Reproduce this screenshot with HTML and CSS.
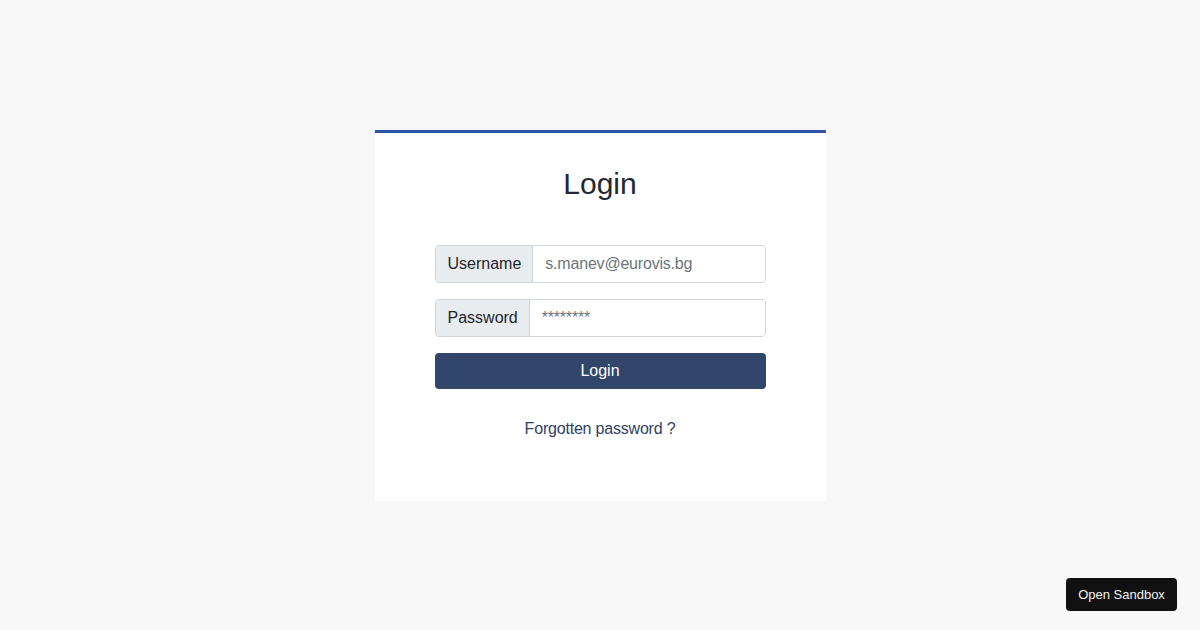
FILE: index.html
```html
<!DOCTYPE html>
<html lang="en">
<head>
<meta charset="utf-8">
<title>Login</title>
<link rel="stylesheet" href="styles.css">
</head>
<body>
<main class="page">
  <section class="card">
    <h2 class="title">Login</h2>
    <form class="form">
      <div class="group">
        <span class="group-label">Username</span>
        <input class="group-input" type="text" placeholder="s.manev@eurovis.bg">
      </div>
      <div class="group">
        <span class="group-label">Password</span>
        <input class="group-input" type="text" placeholder="********">
      </div>
      <button class="btn" type="button">Login</button>
    </form>
    <a class="forgot" href="#">Forgotten password ?</a>
  </section>
</main>
<button class="sandbox" type="button">Open Sandbox</button>
</body>
</html>
```
FILE: styles.css
```css
* { box-sizing: border-box; }
html, body { margin: 0; padding: 0; }
body {
  background: #f8f8f8;
  font-family: "Liberation Sans", Arial, sans-serif;
  color: #212529;
  height: 630px;
  overflow: hidden;
}
.page {
  display: flex;
  justify-content: center;
  padding-top: 130px;
}
.card {
  width: 451px;
  background: #fff;
  border-top: 3px solid #2f54a3;
  padding: 32px 60px 60px;
  display: flex;
  flex-direction: column;
  align-items: center;
}
.title {
  margin: 0 0 42px;
  font-size: 30px;
  font-weight: 400;
  line-height: 38px;
  color: #232833;
}
.form {
  width: 100%;
  display: flex;
  flex-direction: column;
  gap: 16px;
}
.group {
  display: flex;
  height: 38px;
  border: 1px solid #ced4da;
  border-radius: 4px;
  overflow: hidden;
}
.group-label {
  display: flex;
  align-items: center;
  padding: 0 11px 0 12px;
  background: #e9ecef;
  border-right: 1px solid #ced4da;
  font-size: 16px;
  color: #212529;
}
.group-input {
  flex: 1;
  min-width: 0;
  border: 0;
  outline: 0;
  padding: 0 12px;
  font-family: inherit;
  font-size: 16px;
  letter-spacing: -0.2px;
  color: #212529;
  background: #fff;
}
.group-input::placeholder { color: #6c757d; opacity: 1; }
.btn {
  height: 36px;
  border: 0;
  border-radius: 4px;
  background: #32466c;
  color: #fff;
  font-family: inherit;
  font-size: 16px;
  padding: 0;
}
.forgot {
  margin-top: 28px;
  font-size: 16px;
  line-height: 24px;
  letter-spacing: -0.2px;
  color: #2f4066;
  text-decoration: none;
}
.sandbox {
  position: fixed;
  right: 23px;
  bottom: 19px;
  width: 111px;
  height: 33px;
  border: 0;
  border-radius: 4px;
  background: #111;
  color: #f2f2f2;
  font-family: "Liberation Sans", Arial, sans-serif;
  font-size: 13px;
  padding: 0;
}
```
